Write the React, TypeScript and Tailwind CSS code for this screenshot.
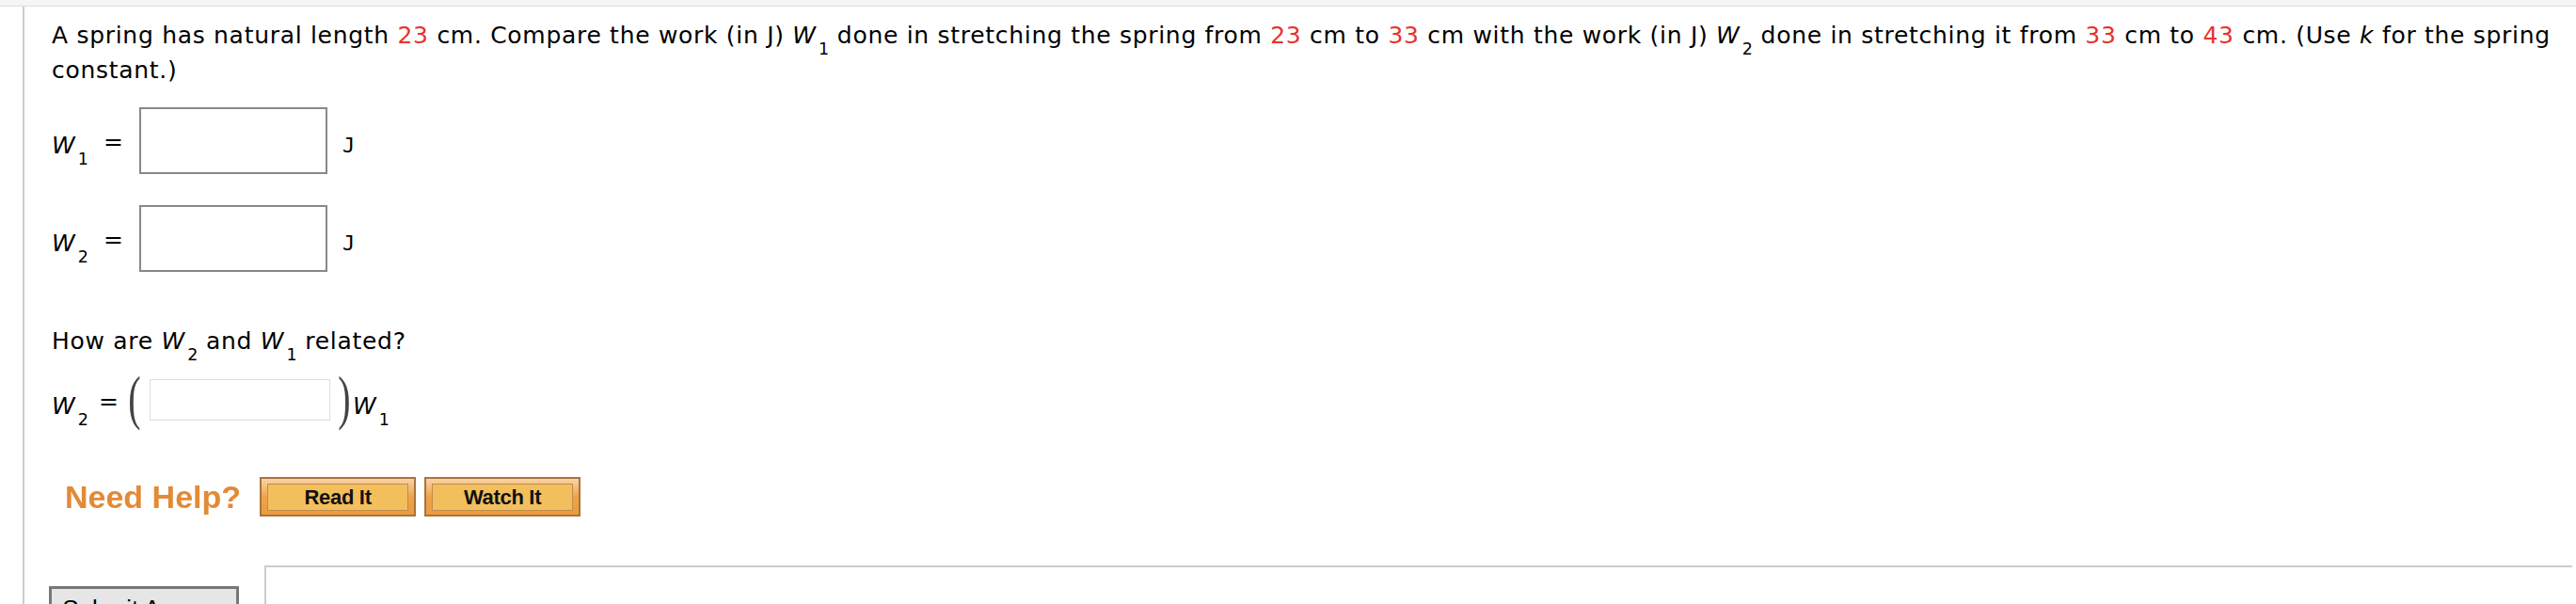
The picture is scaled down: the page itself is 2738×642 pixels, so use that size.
import React from 'react'

// Variable with a MathJax-style dropped subscript, e.g. W₁
const Var = ({ name, sub }: { name: string; sub: string }) => (
  <span className="whitespace-nowrap tracking-normal">
    <i>{name}</i>
    <span className="ml-[3px] inline-block align-[-12px] text-[17.5px] leading-[0]">{sub}</span>
  </span>
)

const Red = ({ children }: { children: React.ReactNode }) => (
  <span className="text-[#e8322b]">{children}</span>
)

const HelpButton = ({ label }: { label: string }) => (
  <div className="h-[42px] w-[166px] border-2 border-[#a8743a] bg-gradient-to-b from-[#f9d3a4] via-[#efa34c] to-[#ec9a40] px-[6px] pt-[5px] pb-[4px]">
    <div className="flex h-full items-center justify-center border border-[#bf8d4c] bg-[#f2bf5c] font-['Liberation_Sans',Arial,sans-serif] text-[22px] font-bold tracking-[-0.3px] text-[#111]">
      {label}
    </div>
  </div>
)

const Paren = ({ ch }: { ch: string }) => (
  <span className="inline-block w-[18px] origin-center scale-y-[1.6] text-center font-['Liberation_Serif',serif] text-[40px] leading-none text-[#444]">
    {ch}
  </span>
)

export default function App() {
  return (
    <div className="h-[642px] overflow-hidden bg-white font-['DejaVu_Sans',Verdana,sans-serif] text-black">
      <div className="h-[7px] border-b border-[#dddddd] bg-[#f5f5f5]" />
      <div className="ml-[24px] h-full border-l-2 border-[#cccccc] pt-[12px] pr-[4px] pl-[29px]">
        <p className="text-[25px] leading-[37px] tracking-[0.7px]">
          A spring has natural length <Red>23</Red> cm. Compare the work (in J) <Var name="W" sub="1" /> done in
          stretching the spring from <Red>23</Red> cm to <Red>33</Red> cm with the work (in J){' '}
          <Var name="W" sub="2" /> done in stretching it from <Red>33</Red> cm to <Red>43</Red> cm. (Use{' '}
          <i>k</i> for the spring constant.)
        </p>

        {/* W1 / W2 answer rows */}
        <div className="mt-[21px] flex h-[71px] items-center text-[25px]">
          <span className="w-[55px] pt-[10px]">
            <Var name="W" sub="1" />
          </span>
          <span className="pt-[2px]">=</span>
          <input className="ml-[17px] h-[71px] w-[200px] border-2 border-[#888888] bg-white outline-none" />
          <span className="ml-[16px] pt-[10px] font-['DejaVu_Sans_Mono',monospace] text-[22px]">J</span>
        </div>
        <div className="mt-[33px] flex h-[71px] items-center text-[25px]">
          <span className="w-[55px] pt-[10px]">
            <Var name="W" sub="2" />
          </span>
          <span className="pt-[2px]">=</span>
          <input className="ml-[17px] h-[71px] w-[200px] border-2 border-[#888888] bg-white outline-none" />
          <span className="ml-[16px] pt-[10px] font-['DejaVu_Sans_Mono',monospace] text-[22px]">J</span>
        </div>

        <p className="mt-[55px] text-[25px] leading-[37px] tracking-[0.7px]">
          How are <Var name="W" sub="2" /> and <Var name="W" sub="1" /> related?
        </p>

        <div className="mt-[15px] flex h-[57px] items-center text-[25px]">
          <span className="w-[50px] pt-[14px]">
            <Var name="W" sub="2" />
          </span>
          <span className="pt-[4px]">=</span>
          <span className="ml-[8px]">
            <Paren ch="(" />
          </span>
          <input className="ml-[7px] h-[44px] w-[192px] border border-[#dddddd] bg-white outline-none" />
          <span className="ml-[6px]">
            <Paren ch=")" />
          </span>
          <span className="pt-[14px]">
            <Var name="W" sub="1" />
          </span>
        </div>

        {/* help links */}
        <div className="mt-[54px] flex items-center pl-[14px]">
          <span className="font-['Liberation_Sans',Arial,sans-serif] text-[34px] leading-none font-bold text-[#e38a35] [filter:blur(0.4px)]">
            Need Help?
          </span>
          <div className="ml-[20px]">
            <HelpButton label="Read It" />
          </div>
          <div className="ml-[9px]">
            <HelpButton label="Watch It" />
          </div>
        </div>

        {/* submit row */}
        <div className="mt-[52px] -ml-[3px] flex items-start">
          <button className="mt-[22px] h-[48px] w-[202px] border-[3px] border-[#777777] bg-[#e6e6e6] font-['Liberation_Sans',Arial,sans-serif] text-[26px] text-black">
            Submit Answer
          </button>
          <div className="ml-[27px] h-[120px] flex-1 border-t-2 border-l-2 border-[#cccccc]" />
        </div>
      </div>
    </div>
  )
}
